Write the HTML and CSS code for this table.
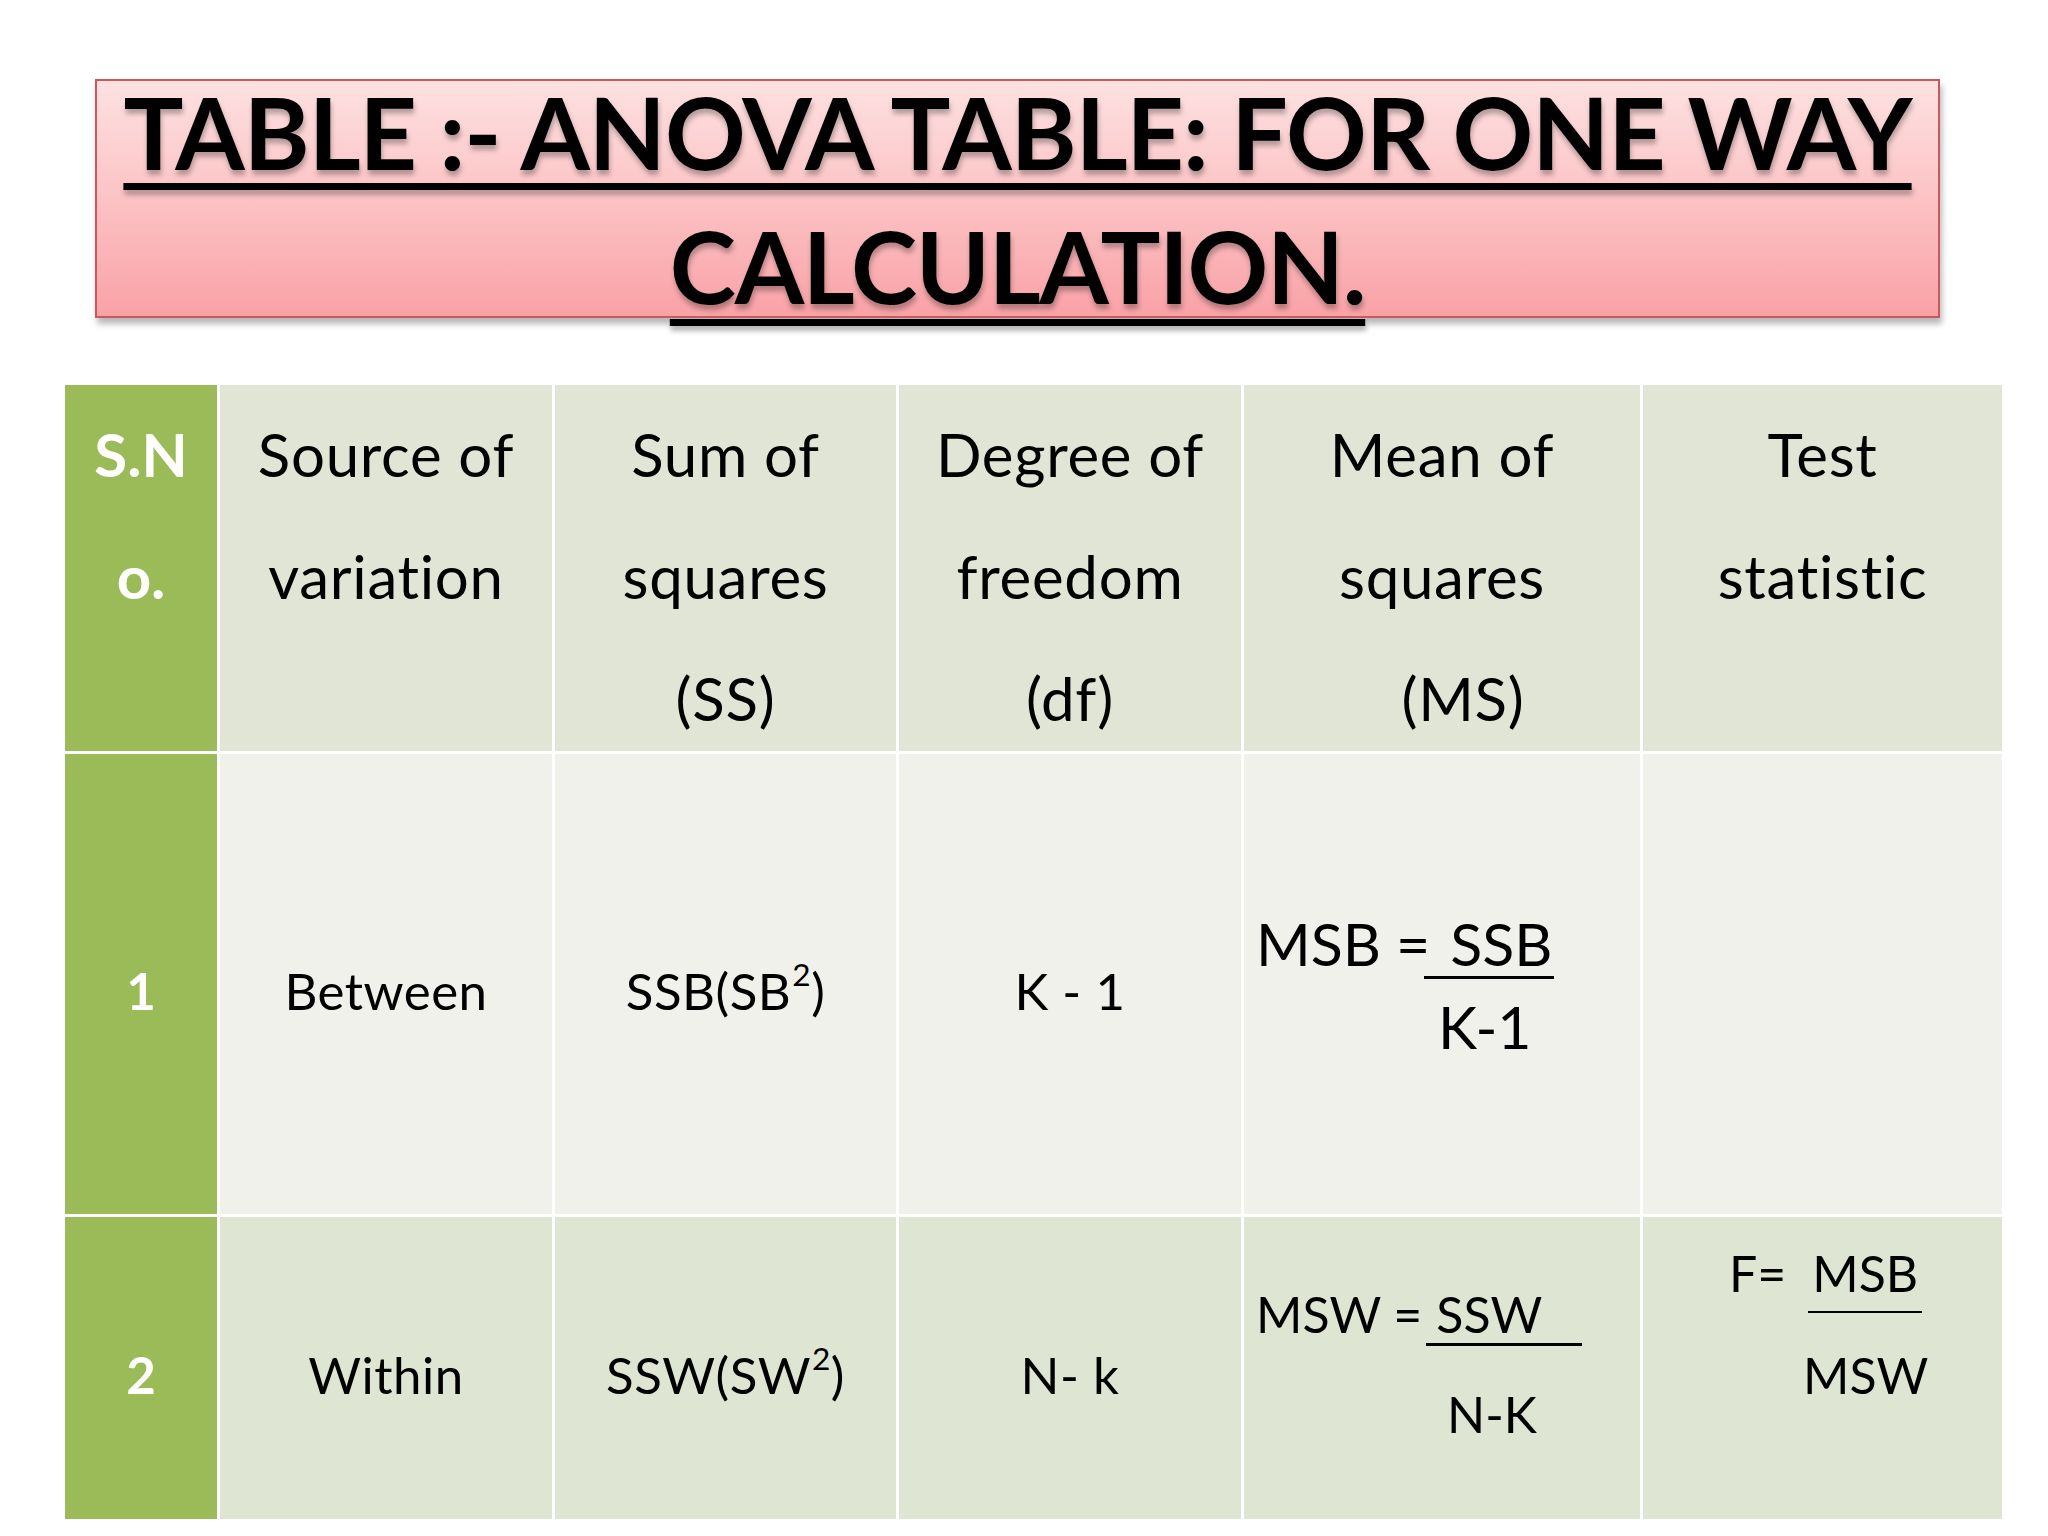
FILE: index.html
```html
<!DOCTYPE html>
<html lang="en">
<head>
<meta charset="utf-8">
<title>ANOVA Table</title>
<link rel="stylesheet" href="styles.css">
</head>
<body>
<div class="slide">
  <div class="title-box">
    <div class="title-line l1">TABLE :- ANOVA TABLE: FOR ONE WAY</div>
    <div class="title-line l2">CALCULATION.</div>
  </div>

  <div class="anova">
    <div class="cell sn head-sn">S.N<br>o.</div>
    <div class="cell head">Source of<br>variation</div>
    <div class="cell head">Sum of<br>squares<br>(SS)</div>
    <div class="cell head">Degree of<br>freedom<br>(df)</div>
    <div class="cell head">Mean of<br>squares<br><span class="shift">(MS)</span></div>
    <div class="cell head">Test<br>statistic</div>

    <div class="cell sn body-sn">1</div>
    <div class="cell body r1">Between</div>
    <div class="cell body r1">SSB(SB<span class="sq">2</span>)</div>
    <div class="cell body r1">K - 1</div>
    <div class="cell r1 frac-msb">
      <div class="fl">MSB =<span class="num">SSB</span></div>
      <div class="fl"><span class="den">K-1</span></div>
    </div>
    <div class="cell r1"></div>

    <div class="cell sn body-sn">2</div>
    <div class="cell body r2">Within</div>
    <div class="cell body r2">SSW(SW<span class="sq">2</span>)</div>
    <div class="cell body r2">N- k</div>
    <div class="cell r2 frac-msw">
      <div class="fl">MSW =<span class="num">SSW</span></div>
      <div class="fl"><span class="den">N-K</span></div>
    </div>
    <div class="cell r2 frac-f">
      <div class="fl">F=<span class="num">MSB</span></div>
      <div class="fl"><span class="den">MSW</span></div>
    </div>
  </div>
</div>
</body>
</html>
```

FILE: styles.css
```css
html, body {
  margin: 0;
  padding: 0;
  background: #ffffff;
}

body {
  width: 2048px;
  height: 1536px;
  overflow: hidden;
  font-family: Lato, "Open Sans", "Liberation Sans", sans-serif;
  color: #000000;
}

.slide {
  display: flex;
  flex-direction: column;
  align-items: flex-start;
  padding-top: 79px;
}

/* ---------- Title ---------- */
.title-box {
  box-sizing: border-box;
  margin-left: 95px;
  width: 1845px;
  height: 239px;
  border: 2px solid #c9595c;
  background: linear-gradient(to bottom, #fde1e1 0%, #fcc6c8 45%, #f9a2a6 100%);
  box-shadow: 2px 6px 6px rgba(0, 0, 0, 0.28);
  text-align: center;
  font-weight: 700;
  font-size: 100px;
  white-space: nowrap;
}

.title-line {
  text-decoration: underline;
  text-decoration-thickness: 7px;
  text-decoration-skip-ink: none;
  text-shadow: 1px 5px 5px rgba(0, 0, 0, 0.28);
}

.title-line.l1 {
  line-height: 100px;
  letter-spacing: -1px;
  text-underline-offset: 13px;
}

.title-line.l2 {
  line-height: 135px;
  margin-top: 17px;
  letter-spacing: -1.3px;
  text-underline-offset: 15px;
}

/* ---------- Table ---------- */
.anova {
  margin-top: 67px;
  margin-left: 65px;
  display: grid;
  grid-template-columns: 152px 332px 341px 342px 396px 359px;
  grid-template-rows: 366px 460px 302px;
  gap: 3px;
  background: #ffffff;
}

.cell {
  box-sizing: border-box;
  background: #e1e5d5;
}

.cell.r1 { background: #f0f1eb; }
.cell.r2 { background: #dfe5d3; }

.cell.sn {
  background: #9bbb59;
  color: #ffffff;
  font-weight: 700;
  text-align: center;
}

.head, .head-sn {
  font-size: 60px;
  line-height: 122px;
  padding-top: 8px;
  text-align: center;
}

.head { letter-spacing: 0.7px; }

.shift { padding-left: 42px; }

.body, .body-sn {
  display: flex;
  align-items: center;
  justify-content: center;
  font-size: 51px;
  line-height: 60px;
  padding-top: 13px;
}

.body { letter-spacing: 0.5px; }

.sq {
  font-size: 0.62em;
  line-height: 1;
  position: relative;
  top: -0.5em;
  margin-left: 1px;
}

/* ---------- Fractions ---------- */
.num {
  display: inline-block;
  line-height: 1;
  border-bottom: 3px solid #000000;
}

.frac-msb {
  font-size: 59px;
  line-height: 83px;
  padding-top: 148px;
  padding-left: 12px;
  white-space: nowrap;
}
.frac-msb .num {
  margin-left: -6px;
  padding: 0 2px 3px 26px;
}
.frac-msb .den { margin-left: 182px; }

.frac-msw {
  font-size: 50px;
  line-height: 100px;
  padding-top: 47px;
  padding-left: 12px;
  white-space: nowrap;
}
.frac-msw .num {
  margin-left: 4px;
  padding: 0 40px 4px 10px;
}
.frac-msw .den { margin-left: 191px; }

.frac-f {
  font-size: 50px;
  line-height: 102px;
  padding-top: 5px;
  padding-left: 86px;
  white-space: nowrap;
}
.frac-f .num {
  margin-left: 22px;
  padding: 0 4px 13px 4px;
  border-bottom-width: 2px;
}
.frac-f .den { margin-left: 74px; }
```
